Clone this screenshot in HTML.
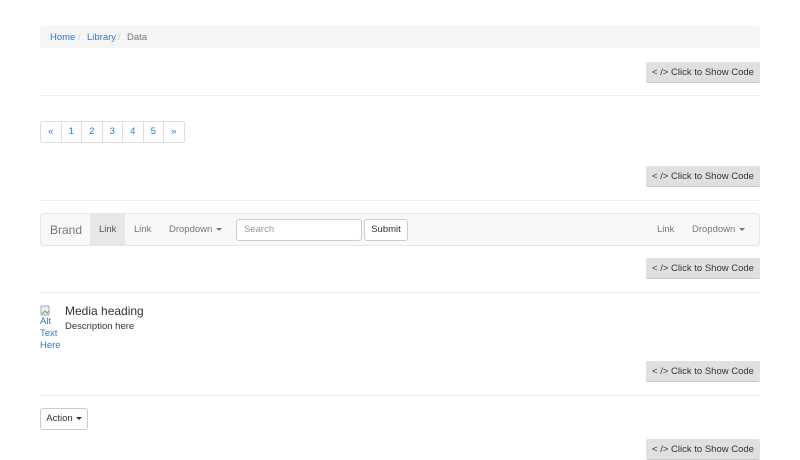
<!DOCTYPE html>
<html><head><style>
body{margin:0;width:800px;height:450px;overflow:hidden;background:#fff;font-family:"Liberation Sans",sans-serif;font-size:9.5px;line-height:12px;color:#333;position:relative}
.a{position:absolute}
.bc{left:40px;top:26px;width:720px;height:22px;background:#f5f5f5;border-radius:3px}
.bc span{position:absolute;top:6px}
.lnk{color:#337ab7}
.btn{position:absolute;left:646px;width:114px;height:20px;background:#e0e0e0;border-bottom:1px solid #c8c8c8;border-radius:2px;text-align:center;line-height:21px;font-size:9.5px;color:#333}
.hr{position:absolute;left:40px;width:720px;height:1px;background:#eee}
.pg{left:40px;top:121px;height:20px;display:flex;border:1px solid #ddd;border-radius:3px}
.pg div{width:19.5px;height:20px;line-height:20px;text-align:center;color:#337ab7;border-left:1px solid #ddd}
.pg div:first-child{border-left:none}
.nav{left:40px;top:213px;width:718px;height:31px;background:#f8f8f8;border:1px solid #e7e7e7;border-radius:3px}
.nav span{position:absolute;top:10px;color:#777}
.caret{display:inline-block;width:0;height:0;border-left:3px solid transparent;border-right:3px solid transparent;border-top:3px solid #777;vertical-align:middle;margin-left:4px}
</style></head><body>
<div class="a bc"><span class="lnk" style="left:10px">Home</span><span style="left:38px;color:#ccc">/</span><span class="lnk" style="left:47px">Library</span><span style="left:78px;color:#ccc">/</span><span style="left:87px;color:#777">Data</span></div>
<div class="btn" style="top:62px">&lt; /&gt; Click to Show Code</div>
<div class="hr" style="top:95px"></div>
<div class="a pg"><div>«</div><div>1</div><div>2</div><div>3</div><div>4</div><div>5</div><div>»</div></div>
<div class="btn" style="top:166px">&lt; /&gt; Click to Show Code</div>
<div class="hr" style="top:200px"></div>
<div class="a nav">
<span style="left:9px;top:9px;font-size:12px;line-height:14px">Brand</span>
<div class="a" style="left:49px;top:0;width:35px;height:31px;background:#e7e7e7"></div>
<span style="left:58px;color:#555">Link</span>
<span style="left:93px">Link</span>
<span style="left:128px">Dropdown<i class="caret"></i></span>
<div class="a" style="left:195px;top:5px;width:124px;height:20px;background:#fff;border:1px solid #ccc;border-radius:3px"></div>
<span style="left:203px;color:#999">Search</span>
<div class="a" style="left:323px;top:5px;width:42px;height:20px;background:#fff;border:1px solid #ccc;border-radius:3px;text-align:center;line-height:20px;color:#333">Submit</div>
<span style="left:616px">Link</span>
<span style="left:651px">Dropdown<i class="caret"></i></span>
</div>
<div class="btn" style="top:258px">&lt; /&gt; Click to Show Code</div>
<div class="hr" style="top:292px"></div>
<svg class="a" style="left:40px;top:305px" width="11" height="11"><rect x="1" y="1" width="8" height="9" fill="#e8eef4" stroke="#aab"/><path d="M2 9l3-3 2 2 2-2" stroke="#6a6" fill="none"/></svg>
<div class="a lnk" style="left:40px;top:316px;line-height:12px;font-size:9.5px">Alt<br>Text<br>Here</div>
<div class="a" style="left:65px;top:304px;font-size:12px;line-height:14px">Media heading</div>
<div class="a" style="left:65px;top:321px">Description here</div>
<div class="btn" style="top:361px">&lt; /&gt; Click to Show Code</div>
<div class="hr" style="top:395px"></div>
<div class="a" style="left:40px;top:408px;width:46px;height:20px;border:1px solid #ccc;border-radius:3px;line-height:20px;text-align:center">Action<i class="caret" style="border-top-color:#333;margin-left:3px"></i></div>
<div class="btn" style="top:439px">&lt; /&gt; Click to Show Code</div>
</body></html>
